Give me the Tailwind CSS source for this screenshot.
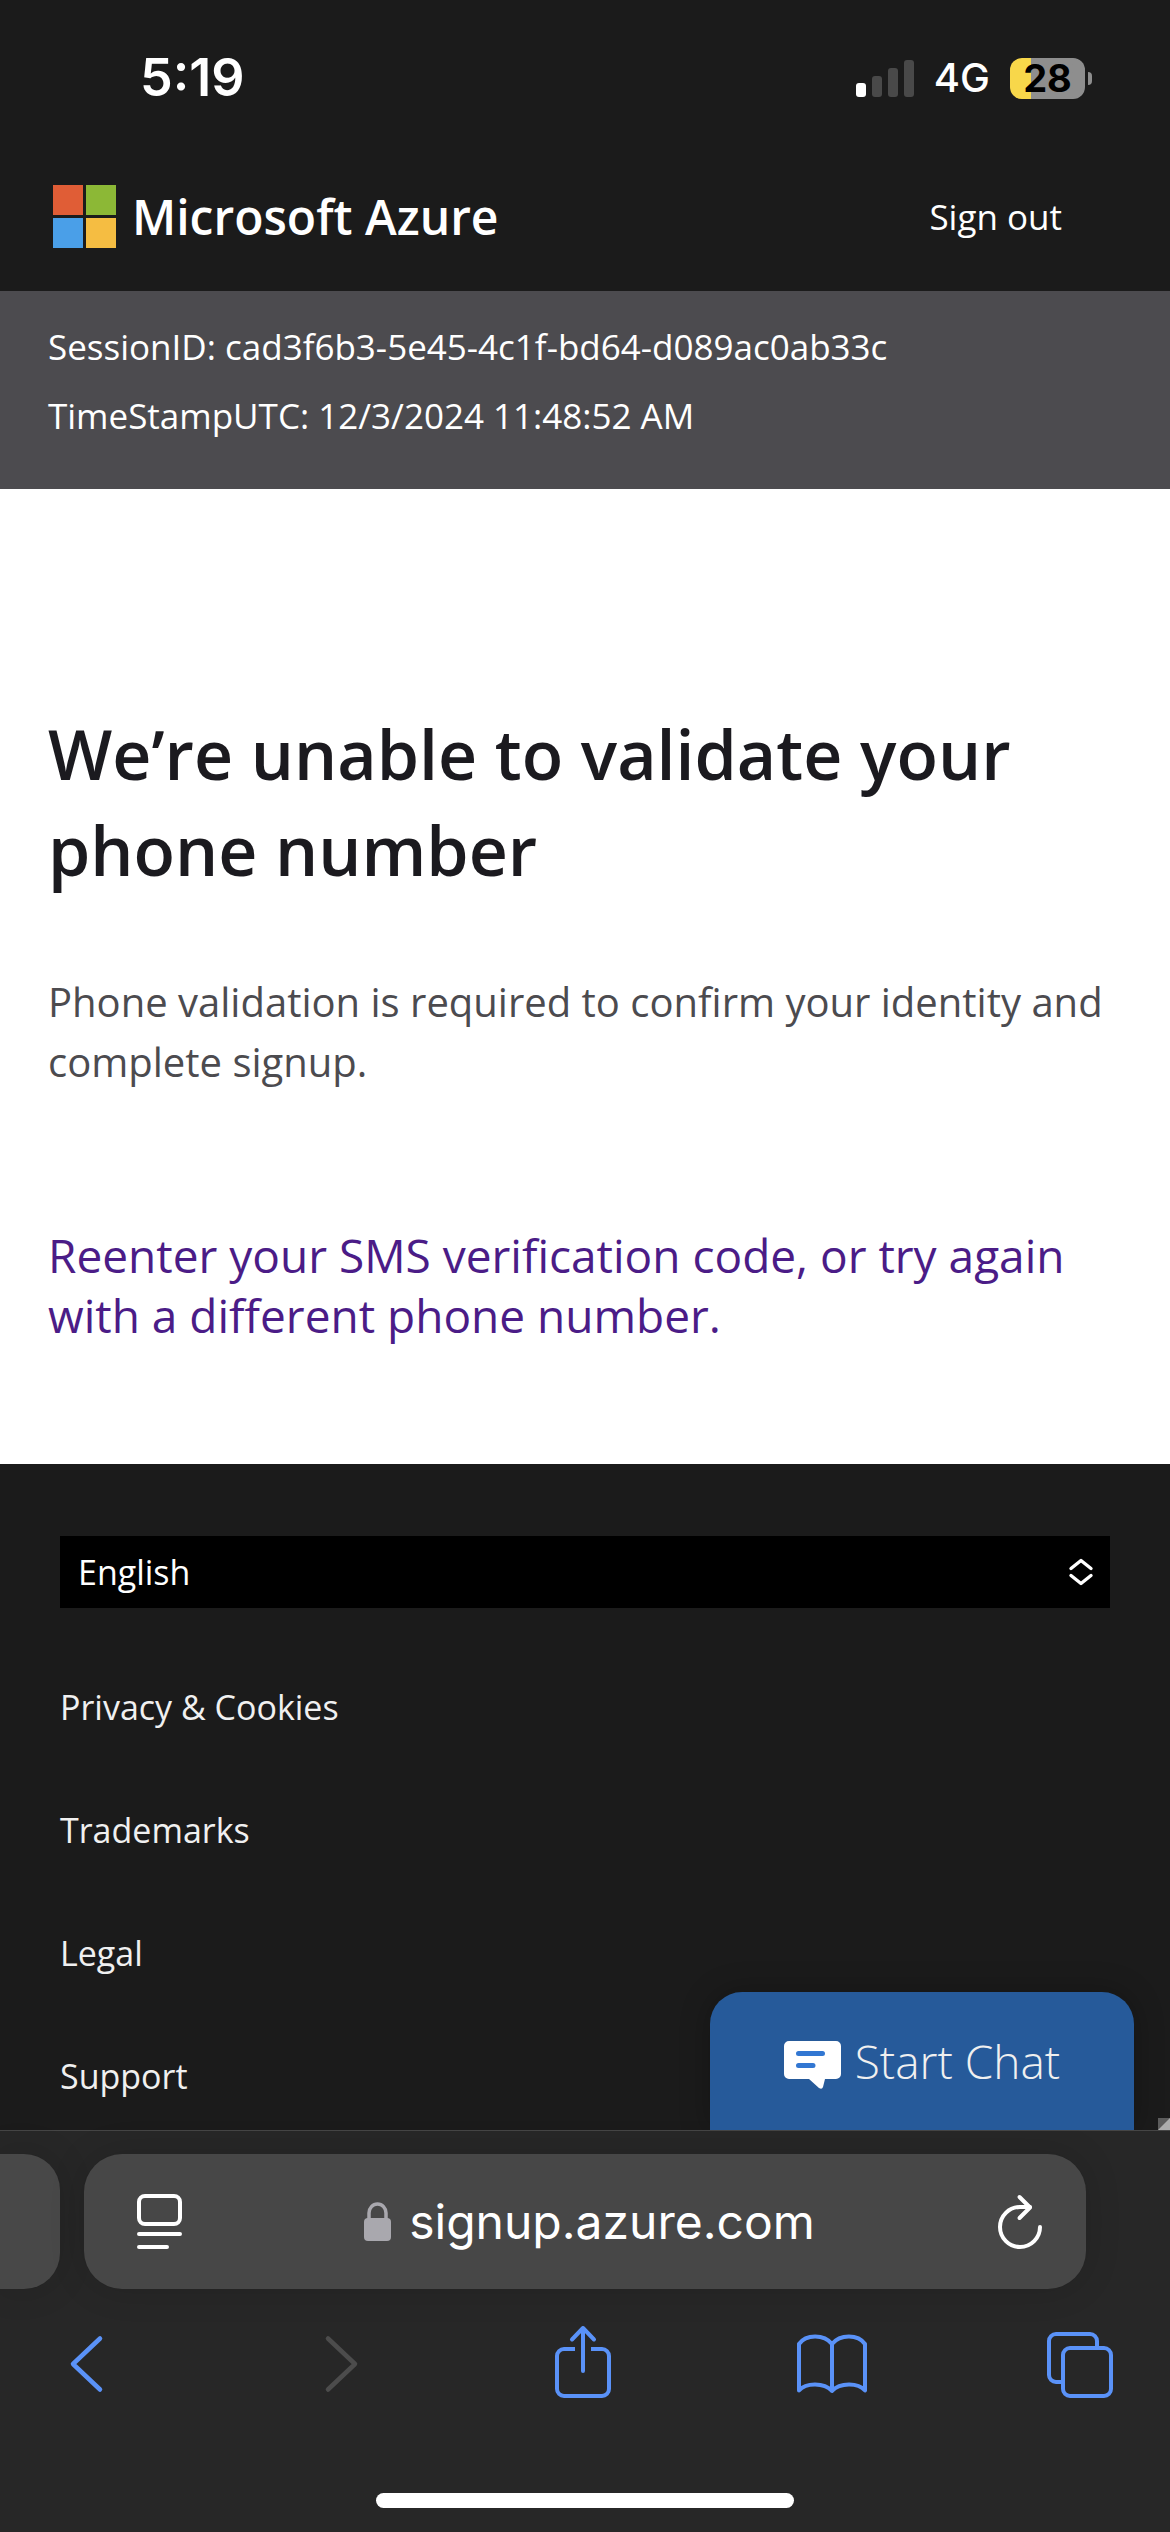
<!DOCTYPE html>
<html lang="en">
<head>
<meta charset="utf-8">
<meta name="viewport" content="width=device-width, initial-scale=1">
<title>Microsoft Azure</title>
<script src="https://cdn.jsdelivr.net/npm/@tailwindcss/browser@4"></script>
</head>
<body class="flex min-h-screen flex-col bg-[#1b1b1b] font-['Open_Sans',sans-serif] text-white">

  <!-- Phone status bar -->
  <div class="flex items-center justify-between pt-12 pr-[78px] pb-8 pl-[140px] font-['Inter',sans-serif]">
    <span class="text-[52px] leading-[60px] font-semibold">5:19</span>
    <div class="flex items-center gap-5">
      <svg class="h-[37px] w-[58px]" viewBox="0 0 58 37" aria-hidden="true">
        <rect x="0" y="23" width="10" height="14" rx="3" fill="#fff"/>
        <rect x="16" y="16" width="10" height="21" rx="3" fill="#494949"/>
        <rect x="32" y="8" width="10" height="29" rx="3" fill="#494949"/>
        <rect x="48" y="0" width="10" height="37" rx="3" fill="#494949"/>
      </svg>
      <span class="text-[40px] leading-[60px] font-medium">4G</span>
      <div class="flex items-center gap-[3px]">
        <span class="flex h-[41px] w-[75px] items-center justify-center rounded-xl bg-linear-to-r from-[#f8d74a] from-28% to-[#8e8e8e] to-28% text-[38px] leading-[41px] font-bold text-black">28</span>
        <span class="h-[13px] w-[4px] rounded-r-full bg-[#8e8e8e]"></span>
      </div>
    </div>
  </div>

  <header class="flex h-[151px] items-center justify-between pt-0.5 pr-[108px] pl-[53px]">
    <a href="#" class="flex items-center gap-4">
      <svg class="size-[63px]" viewBox="0 0 63 63" aria-hidden="true">
        <path fill="#e05d36" d="M0 0h30v30H0z"/>
        <path fill="#8cb836" d="M33 0h30v30H33z"/>
        <path fill="#4a9fe8" d="M0 33h30v30H0z"/>
        <path fill="#f5bd42" d="M33 33h30v30H33z"/>
      </svg>
      <span class="text-[48px] leading-[60px] font-semibold">Microsoft Azure</span>
    </a>
    <a href="#" class="text-[35px] leading-[48px]">Sign out</a>
  </header>

  <div class="bg-[#4c4b4f] px-12 pt-[21px] pb-[39px] text-[35px] leading-[69px]">
    <p>SessionID: cad3f6b3-5e45-4c1f-bd64-d089ac0ab33c</p>
    <p>TimeStampUTC: 12/3/2024 11:48:52 AM</p>
  </div>

  <main class="bg-white px-12 pt-[217px] pb-[119px]">
    <h1 class="text-[68px] leading-[96px] font-semibold text-[#1b1a1f]">We’re unable to validate your phone number</h1>
    <p class="mt-[74px] text-[40px] leading-[60px] text-[#4c4b4f]">Phone validation is required to confirm your identity and complete signup.</p>
    <p class="mt-[133px] text-[46px] leading-[60px]"><a href="#" class="text-[#4b1c87]">Reenter your SMS verification code, or try again with a different phone number.</a></p>
  </main>

  <footer class="relative flex-1 overflow-hidden px-15 pt-18 pb-[17px] text-[34px] leading-[48px] text-[#f0f0f0]">
    <div class="relative">
      <select aria-label="Language" class="block h-18 w-full appearance-none bg-black px-[18px] text-white">
        <option>English</option>
      </select>
      <svg class="pointer-events-none absolute top-[22px] right-4 h-7 w-[26px]" viewBox="0 0 26 28" fill="none" stroke="#fff" stroke-width="3.4" stroke-linecap="round" stroke-linejoin="round" aria-hidden="true">
        <path d="M3 10.500 13 2.500 23 10.500M3 17.500 13 25.500 23 17.500"/>
      </svg>
    </div>
    <nav class="mt-[75px] flex flex-col items-start gap-[75px]">
      <a href="#">Privacy &amp; Cookies</a>
      <a href="#">Trademarks</a>
      <a href="#">Legal</a>
      <a href="#">Support</a>
    </nav>
    <button class="absolute right-9 bottom-0 flex h-[138px] w-[424px] items-center justify-center gap-[14px] rounded-t-[32px] bg-[#265a9a] text-[46px] leading-[60px] font-light shadow-[0_0_30px_rgba(0,0,0,0.25)]">
      <svg class="h-[56px] w-[57px]" viewBox="0 -8 57 56" aria-hidden="true">
        <path fill="#fff" d="M5 0h47a5 5 0 0 1 5 5v28a5 5 0 0 1-5 5H41l-2 8q-1 3-4 1L25 38H5a5 5 0 0 1-5-5V5a5 5 0 0 1 5-5z"/>
        <path stroke="#3277d2" stroke-width="5" stroke-linecap="round" d="M14.500 12.500h24M14.500 24.500h14.500"/>
      </svg>
      Start Chat
    </button>
    <svg class="absolute right-0 bottom-0 size-3" viewBox="0 0 12 12" aria-hidden="true">
      <path fill="#5c5c5c" d="M0 0h12v12H0z"/><path fill="#adadad" d="M12 0v12H0z"/>
    </svg>
  </footer>

  <!-- Browser toolbar -->
  <div class="border-t border-[#454545] bg-[#272727] pt-[23px] pb-6 font-['Inter',sans-serif]">
    <div class="flex gap-6 pr-[84px]">
      <div class="h-[135px] w-15 rounded-r-[36px] bg-[#484848] shadow-[0_0_36px_rgba(0,0,0,0.14)]"></div>
      <div class="flex h-[135px] flex-1 items-center justify-between rounded-[38px] bg-[#474747] pr-[42px] pl-[51px] shadow-[0_0_36px_rgba(0,0,0,0.14)]">
        <button aria-label="Page menu">
          <svg class="h-[55px] w-12" viewBox="0 0 48 55" fill="none" stroke="#fff" stroke-width="4" stroke-linecap="round" aria-hidden="true">
            <rect x="4" y="2" width="41" height="28" rx="6"/>
            <path d="M4 40h41M4 53h28"/>
          </svg>
        </button>
        <a href="#" class="flex items-center gap-[18px]">
          <svg class="h-[39px] w-[27px]" viewBox="0 0 27 39" aria-hidden="true">
            <rect x="0" y="16" width="27" height="23" rx="4" fill="#a9a8ae"/>
            <path d="M5 18v-7a8.500 9 0 0 1 17 0v7" fill="none" stroke="#a9a8ae" stroke-width="3.500"/>
          </svg>
          <span class="text-[48px] leading-[60px]">signup.azure.com</span>
        </a>
        <button aria-label="Reload">
          <svg class="h-[56px] w-[48px]" viewBox="0 0 48 56" fill="none" stroke="#fff" stroke-width="4" stroke-linecap="round" stroke-linejoin="round" aria-hidden="true">
            <path d="M44 33a20 20 0 1 1-20-20h10"/>
            <path d="M23.500 3 34 13.500 23.500 24"/>
          </svg>
        </button>
      </div>
    </div>
    <div class="mt-9 flex items-center justify-between pr-[50px] pl-[46px] text-[#5a92f8]">
      <button aria-label="Back" class="flex w-20 justify-center">
        <svg class="h-[78px] w-10" viewBox="0 0 40 78" fill="none" stroke="currentColor" stroke-width="4.500" stroke-linecap="round" stroke-linejoin="round" aria-hidden="true"><path d="M34 13.500 7 39l27 25.500"/></svg>
      </button>
      <button aria-label="Forward" disabled class="flex w-20 justify-end text-[#4c4c4c]">
        <svg class="h-[78px] w-15" viewBox="0 0 60 78" fill="none" stroke="currentColor" stroke-width="4.500" stroke-linecap="round" stroke-linejoin="round" aria-hidden="true"><path d="M13 13.500 40 39 13 64.500"/></svg>
      </button>
      <button aria-label="Share" class="flex w-20 justify-center">
        <svg class="h-[78px] w-15" viewBox="0 0 60 78" fill="none" stroke="currentColor" stroke-width="4" stroke-linecap="round" stroke-linejoin="round" aria-hidden="true">
          <path stroke-linecap="butt" d="M22 24H11a7 7 0 0 0-7 7v33a7 7 0 0 0 7 7h38a7 7 0 0 0 7-7V31a7 7 0 0 0-7-7H38"/>
          <path d="M30 46V3M19 14.500 30 3l11 11.500"/>
        </svg>
      </button>
      <button aria-label="Bookmarks" class="flex w-20 justify-center">
        <svg class="h-[78px] w-[76px]" viewBox="0 0 76 78" fill="none" stroke="currentColor" stroke-width="4" stroke-linecap="round" stroke-linejoin="round" aria-hidden="true">
          <path d="M38 66V19C30 9 12 9 5 19v46.500c7-8 25-8 33 .5 8-8.500 26-8.500 33-.5V19C64 9 46 9 38 19"/>
        </svg>
      </button>
      <button aria-label="Tabs" class="flex w-20 justify-center">
        <svg class="h-[78px] w-[72px]" viewBox="0 0 72 78" fill="none" stroke="currentColor" stroke-width="4" aria-hidden="true">
          <path d="M18 57h-6a7 7 0 0 1-7-7V16a7 7 0 0 1 7-7h34a7 7 0 0 1 7 7v7"/>
          <rect x="19" y="23" width="48" height="48" rx="7"/>
        </svg>
      </button>
    </div>
    <div class="mx-auto mt-[90px] h-[15px] w-[418px] rounded-full bg-white"></div>
  </div>
</body>
</html>
